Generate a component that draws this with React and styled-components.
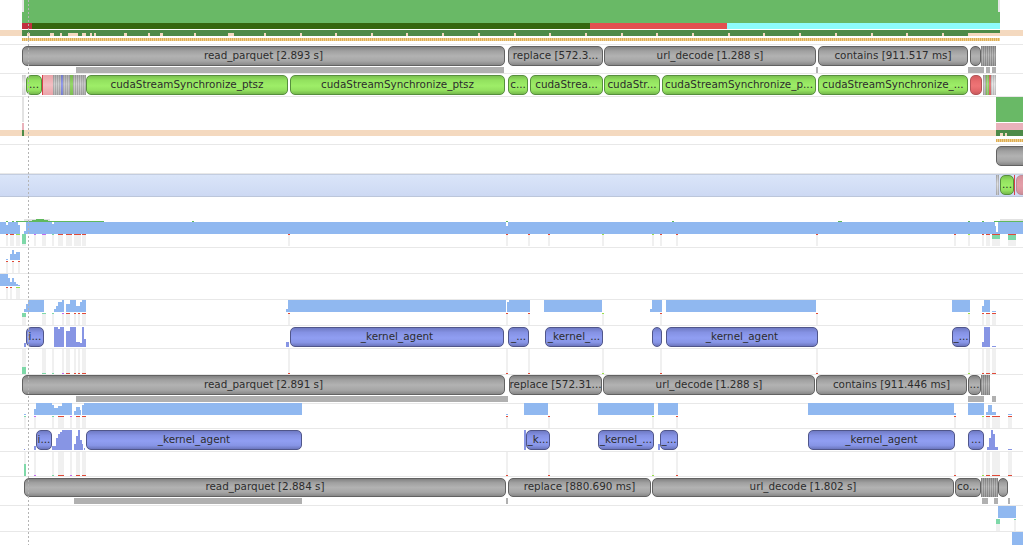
import React from 'react';
import styled, { createGlobalStyle, css } from 'styled-components';

const GlobalStyle = createGlobalStyle`
    html, body {
        margin: 0;
        background: #fff;
        font-family: "DejaVu Sans", "Liberation Sans", sans-serif;
    }
`
const Page = styled.div`
    position: relative;
    width: 1023px;
    height: 545px;
    overflow: hidden;
    display: flex;
    flex-direction: column;
`
const Cursor = styled.div`
    position: absolute;
    left: 28px;
    top: 0;
    bottom: 0;
    width: 1px;
    background: repeating-linear-gradient(180deg, #b4b4b4 0 2px, transparent 2px 4px);
`
const Track = styled.div`
    height: ${p => p.$h}px;
    flex: none;
    box-sizing: border-box;
    border-bottom: 1px solid #e8e8e8;
    ${p => p.$selected && css`
        background: linear-gradient(180deg, #dae5f9, #cdd9f3);
        border-top: 1px solid #c3cde0;
        border-bottom: 1px solid #bcc6da;
    `}
`
const Lane = styled.div`
    position: relative;
    height: ${p => p.$h}px;
    margin-top: ${p => p.$mt || 0}px;
    background: ${p => p.$bg || 'none'};
`

// everything below sits on the time axis, so x and width come from the data
const Block = styled.div`
    position: absolute;
    top: 0;
    bottom: 0;
    background: ${p => p.$color};
`
const HalfBlock = styled(Block)`
    ${p => (p.$low ? 'top: 50%;' : 'bottom: 50%;')}
`
const tones = {
    gray: css`
        border-color: #626262;
        background: linear-gradient(180deg, #828282, #a0a0a0 22%, #b2b2b2 50%, #a6a6a6 78%, #888);
    `,
    green: css`
        border-color: #578f3e;
        background: linear-gradient(180deg, #7cc150, #93e25f 25%, #9eee68 55%, #93e05f 80%, #76ba4c);
    `,
    purple: css`
        border-color: #50568a;
        background: linear-gradient(180deg, #6f7ac4, #8592e4 25%, #909ef2 55%, #8795e6 80%, #6c76be);
    `,
    red: css`
        border-color: #b25558;
        background: linear-gradient(180deg, #d25c5e, #e86c6e 30%, #ee7476 55%, #e2686a 80%, #ca5a5c);
    `,
}
const Span = styled.div`
    position: absolute;
    top: 0;
    bottom: 0;
    box-sizing: border-box;
    display: flex;
    align-items: center;
    justify-content: center;
    padding-bottom: 3px;
    border: 1px solid;
    border-bottom-width: 1.5px;
    border-radius: 5px;
    overflow: hidden;
    white-space: nowrap;
    font-size: 10.4px;
    color: #2c2c2c;
    ${p => tones[p.$tone]}
`
const Stripes = styled.div`
    position: absolute;
    top: 0;
    bottom: 0;
    opacity: 0.95;
    background:
        linear-gradient(180deg, rgba(0,0,0,0.14), rgba(255,255,255,0.1) 45%, rgba(0,0,0,0.1)),
        repeating-linear-gradient(90deg, ${p => p.$a} 0 1px, ${p => p.$b} 1px 2px);
`
const barColors = { blue: '#90b8f0', purple: '#8795e4', green: '#5fb95c', gray: '#e2e2e2' }
const Bar = styled.div`
    position: absolute;
    bottom: 0;
    background: ${p => barColors[p.$tone || 'blue']};
`
const Dotted = styled.div`
    position: absolute;
    top: 0;
    bottom: 0;
    background: repeating-linear-gradient(90deg, #dfae52 0 1px, #eccf93 1px 2px);
`
const Tick = styled.div`
    position: absolute;
    top: 0;
    bottom: 0;
    background: #f0f0f0;
    &::after {
        content: '';
        position: absolute;
        left: 0;
        right: 0;
        height: 1px;
        ${p => (p.$end ? 'bottom: 0;' : 'top: 0;')}
        background: ${p => p.$mark};
    }
`
const Fill = styled.div`
    position: absolute;
    left: 0;
    right: 0;
    bottom: 0;
    background: #7ed8a8;
`

const marks = { r: '#e04a38', p: '#c46af0', g: '#7ed8a8', l: '#9ae04a' }

const Spans = ({ items }) => items.map(([x, w, tone, text], i) => (
    <Span key={i} $tone={tone} style={{ left: x, width: w }}>{text}</Span>
))
const Blocks = ({ items, color }) => items.map(([x, w, c], i) => (
    <Block key={i} $color={c || color} style={{ left: x, width: w }} />
))
const Bars = ({ items, tone }) => items.map(([x, w, h], i) => (
    <Bar key={i} $tone={tone} style={{ left: x, width: w, height: h }} />
))
const StripeSet = ({ items }) => items.map(([x, w, a, b], i) => (
    <Stripes key={i} $a={a} $b={b} style={{ left: x, width: w }} />
))
const Ticks = ({ items, end, tall = {} }) => items.map(([x, w, m], i) => (
    <Tick key={i} $end={end} $mark={marks[m]} style={{ left: x, width: w }}>
        {tall[x] && <Fill style={{ height: tall[x], top: end ? 'auto' : 1 }} />}
    </Tick>
))

const clockTicks = [
    [27, 3], [50, 4], [60, 2], [68, 10], [82, 4], [90, 2], [94, 2], [124, 3], [148, 2], [160, 3], [194, 2], [228, 6], [264, 2], [300, 2],
]
for (let x = 335; x < 965; x += 35.7) clockTicks.push([Math.round(x), 2])

const topSpans = [
    [22, 483, 'gray', 'read_parquet [2.893 s]'],
    [508, 95, 'gray', 'replace [572.3...'],
    [604, 212, 'gray', 'url_decode [1.288 s]'],
    [818, 150, 'gray', 'contains [911.517 ms]'],
    [970, 11, 'gray', ''],
]
const greenSpans = [
    [26, 16, 'green', '...'],
    [86, 202, 'green', 'cudaStreamSynchronize_ptsz'],
    [290, 215, 'green', 'cudaStreamSynchronize_ptsz'],
    [508, 20, 'green', 'c...'],
    [530, 73, 'green', 'cudaStrea...'],
    [604, 56, 'green', 'cudaStr...'],
    [662, 154, 'green', 'cudaStreamSynchronize_p...'],
    [818, 150, 'green', 'cudaStreamSynchronize_...'],
    [970, 12, 'red', ''],
]
const greenStripes = [
    [22, 4, '#e6e6e6', '#f2f2f2'],
    [53, 7, '#a8a8a8', '#c8c8c8'],
    [60, 2, '#c0c0c0', '#d8d8d8'],
    [61, 2, '#8088e8', '#7f8ce8'],
    [63, 7, '#a8a8a8', '#c4c4c4'],
    [70, 3, '#84d050', '#84d050'],
    [73, 8, '#a6a6a6', '#cacaca'],
    [81, 5, '#a8a8a8', '#c0c0c0'],
    [983, 3, '#a8a8a8', '#c8c8c8'],
    [986, 3, '#84d050', '#a8c890'],
    [989, 2, '#e06868', '#e06868'],
    [991, 5, '#c8c8c8', '#e4e4e4'],
]

const midSpans = [
    [26, 18, 'purple', 'i...'],
    [290, 214, 'purple', '_kernel_agent'],
    [508, 21, 'purple', '_...'],
    [545, 58, 'purple', '_kernel_...'],
    [652, 10, 'purple', ''],
    [666, 152, 'purple', '_kernel_agent'],
    [952, 18, 'purple', '_...'],
]
const lowSpans = [
    [36, 16, 'purple', 'i...'],
    [86, 216, 'purple', '_kernel_agent'],
    [526, 24, 'purple', '_k...'],
    [598, 56, 'purple', '_kernel_...'],
    [660, 18, 'purple', '_...'],
    [808, 147, 'purple', '_kernel_agent'],
    [968, 16, 'purple', '...'],
]

const bandBars = [
    [0, 6, 12], [6, 2, 9], [8, 10, 12], [18, 2, 9], [24, 2, 3], [26, 26, 12], [52, 2, 10], [54, 452, 12], [506, 2, 8], [508, 487, 12],
    [995, 1, 8], [996, 2, 2], [998, 25, 12],
]
const firstTicks = [
    [6, 2, 'r'], [10, 4, 'r'], [16, 4, 'l'], [22, 4, 'g'], [34, 2, 'p'], [42, 4, 'p'], [52, 2, 'g'], [58, 5, 'r'], [66, 6, 'r'], [74, 7, 'r'],
    [82, 4, 'r'], [288, 2, 'r'], [506, 2, 'r'], [528, 2, 'r'], [548, 2, 'r'], [602, 2, 'l'], [652, 2, 'l'], [660, 2, 'r'], [676, 2, 'r'],
    [816, 2, 'r'], [954, 2, 'r'], [968, 2, 'l'], [982, 2, 'r'], [986, 4, 'r'], [992, 8, 'r'], [1008, 8, 'r'],
]
const midBlueBars = [
    [24, 2, 3], [26, 2, 8], [28, 16, 12], [54, 2, 3], [56, 2, 6], [58, 4, 10], [62, 2, 12], [66, 4, 8], [70, 4, 12], [74, 2, 12], [76, 4, 6],
    [80, 2, 10], [82, 4, 12], [286, 2, 3], [288, 218, 12], [507, 2, 10], [509, 21, 12], [544, 58, 12], [650, 2, 3], [652, 10, 12], [666, 150, 12],
    [952, 18, 12], [982, 2, 6], [984, 6, 12], [992, 4, 1],
]
const midTicks = [
    [22, 4, 'g'], [42, 4, 'g'], [52, 2, 'g'], [62, 2, 'p'], [66, 4, 'r'], [74, 2, 'r'], [78, 2, 'r'], [82, 4, 'r'], [288, 2, 'r'], [506, 2, 'r'],
    [528, 2, 'r'], [602, 2, 'l'], [660, 2, 'r'], [816, 2, 'r'], [968, 2, 'l'], [982, 2, 'r'], [986, 4, 'r'], [992, 4, 'r'],
]
const midPurpleBars = [
    [24, 2, 4], [54, 4, 20], [58, 2, 18], [60, 4, 20], [66, 4, 16], [70, 6, 20], [76, 4, 5], [80, 2, 4], [82, 2, 20], [84, 2, 8],
    [286, 3, 5], [982, 2, 5], [984, 6, 20], [992, 4, 1],
]
const lowBlueBars = [
    [24, 2, 1], [34, 2, 6], [36, 16, 12], [52, 2, 10], [54, 4, 7], [58, 4, 9], [62, 10, 12], [74, 2, 4], [76, 4, 8], [80, 1, 5], [82, 2, 10], [84, 2, 12],
    [86, 216, 12], [506, 2, 1], [524, 24, 12], [598, 56, 12], [658, 20, 12], [808, 146, 12], [954, 2, 2], [968, 16, 12], [986, 2, 3], [988, 4, 10],
    [992, 4, 3], [1008, 4, 1],
]
const lowTicks = [
    [24, 2, 'g'], [34, 2, 'p'], [52, 2, 'g'], [58, 6, 'r'], [70, 2, 'p'], [76, 4, 'r'], [82, 4, 'r'], [506, 2, 'r'], [548, 2, 'r'], [652, 2, 'l'],
    [676, 2, 'r'], [954, 2, 'r'], [982, 2, 'l'], [986, 4, 'r'], [992, 8, 'r'], [1008, 4, 'r'],
]
const lowPurpleBars = [
    [24, 1, 1], [34, 2, 4], [52, 4, 4], [56, 2, 12], [58, 2, 16], [60, 2, 18], [62, 10, 20], [74, 2, 6], [76, 2, 14], [78, 2, 20], [80, 2, 10], [82, 1, 6],
    [84, 1, 2], [524, 2, 20], [658, 2, 6], [987, 2, 3], [989, 2, 12], [991, 2, 20], [993, 2, 16], [995, 3, 3], [1008, 4, 1],
]

const Ruler = ({ clock }) => (
    <>
        <HalfBlock $color="#4d8a48" style={{ left: clock.x, width: clock.top }} />
        <HalfBlock $low $color="#4d8a48" style={{ left: clock.x, width: clock.low }} />
        {clock.ticks.map(([x, w], i) => (
            <HalfBlock key={i} $low $color="#f4d9bf" style={{ left: x, width: w }} />
        ))}
    </>
)

const App = () => (
    <Page>
        <GlobalStyle />
        <Track $h={45}>
            <Lane $h={23}>
                <Blocks color="#69b966" items={[[24, 974]]} />
                <HalfBlock $low $color="#69b966" style={{ left: 22, width: 2 }} />
                <HalfBlock $color="#e6e6e6" style={{ left: 22, width: 2 }} />
                <HalfBlock $low $color="#69b966" style={{ left: 998, width: 2 }} />
                <HalfBlock $color="#e6e6e6" style={{ left: 998, width: 2 }} />
            </Lane>
            <Lane $h={6}>
                <Blocks items={[[22, 10, '#c2303f'], [32, 558, '#35660f'], [590, 137, '#e25050'], [727, 273, '#8dfcfc']]} />
            </Lane>
            <Lane $h={6} $mt={1} $bg="#f4d9bf">
                <Ruler clock={{ x: 22, top: 978, low: 946, ticks: clockTicks }} />
            </Lane>
            <Lane $h={3} $mt={2}>
                <Dotted style={{ left: 22, width: 978 }} />
            </Lane>
        </Track>
        <Track $h={29}>
            <Lane $h={20} $mt={1}>
                <Spans items={topSpans} />
                <StripeSet items={[[981, 15, '#8a8a8a', '#b0b0b0']]} />
            </Lane>
            <Lane $h={6} $mt={1}>
                <Blocks color="#b0b0b0" items={[[76, 428], [816, 2], [968, 16], [986, 4], [992, 4]]} />
            </Lane>
        </Track>
        <Track $h={23}>
            <Lane $h={20} $mt={1}>
                <StripeSet items={greenStripes} />
                <Block $color="linear-gradient(180deg, #eaa3a8, #f2bfc3 50%, #eaa3a8)" style={{ left: 42, width: 11 }} />
                <Block $color="#d8414c" style={{ left: 42, width: 1 }} />
                <Spans items={greenSpans} />
            </Lane>
        </Track>
        <Track $h={48}>
            <Lane $h={25}>
                <Blocks color="#e2e2e2" items={[[22, 2]]} />
                <Blocks color="#69b966" items={[[996, 27]]} />
            </Lane>
            <Lane $h={7} $mt={1}>
                <Blocks color="#e9b2bb" items={[[22, 2], [996, 27]]} />
            </Lane>
            <Lane $h={6} $bg="#f4d9bf">
                <Ruler clock={{ x: 996, top: 27, low: 27, ticks: [[1000, 3], [1005, 2]] }} />
                <Blocks color="#4d8a48" items={[[22, 2]]} />
            </Lane>
            <Lane $h={3} $mt={3}>
                <Dotted style={{ left: 996, width: 27 }} />
            </Lane>
        </Track>
        <Track $h={29}>
            <Lane $h={20} $mt={1}>
                <Spans items={[[996, 40, 'gray', '']]} />
            </Lane>
        </Track>
        <Track $h={23} $selected>
            <Lane $h={20}>
                <StripeSet items={[[996, 3, '#b8b8b8', '#dcdcdc']]} />
                <Spans items={[[1000, 14, 'green', '...']]} />
                <Block $color="#d8414c" style={{ left: 1014, width: 1 }} />
                <Span $tone="red" style={{ left: 1016, width: 20, opacity: 0.6 }} />
            </Lane>
        </Track>
        <Track $h={51}>
            <Lane $h={3} $mt={22}>
                <Bars tone="gray" items={[[24, 26, 3], [1000, 23, 3]]} />
                <Bars tone="green" items={[[6, 2, 1], [12, 2, 1], [16, 88, 1], [32, 16, 2], [36, 8, 3], [192, 2, 1], [506, 2, 1], [672, 2, 1], [838, 4, 1], [968, 2, 1], [982, 2, 1], [994, 29, 1]]} />
            </Lane>
            <Lane $h={12}>
                <Bars items={bandBars} />
            </Lane>
            <Lane $h={12}>
                <Ticks items={firstTicks} tall={{ 22: 9, 992: 4, 1008: 5 }} />
            </Lane>
        </Track>
        <Track $h={26}>
            <Lane $h={10} $mt={2}>
                <Bars items={[[6, 2, 1], [10, 2, 6], [12, 2, 10], [14, 2, 6], [16, 4, 8]]} />
            </Lane>
            <Lane $h={12} $mt={1}>
                <Ticks items={[[6, 2, 'r'], [12, 2, 'r'], [18, 2, 'r']]} />
            </Lane>
        </Track>
        <Track $h={26}>
            <Lane $h={12}>
                <Bars items={[[0, 8, 12], [8, 2, 8], [10, 2, 4], [12, 2, 8], [14, 2, 4], [16, 2, 2], [18, 2, 1]]} />
            </Lane>
            <Lane $h={12} $mt={1}>
                <Ticks items={[[6, 2, 'r'], [10, 2, 'r'], [16, 4, 'l']]} />
            </Lane>
        </Track>
        <Track $h={26}>
            <Lane $h={12}>
                <Bars items={midBlueBars} />
            </Lane>
            <Lane $h={12} $mt={1}>
                <Ticks items={midTicks} tall={{ 22: 3 }} />
            </Lane>
        </Track>
        <Track $h={23}>
            <Lane $h={20} $mt={1}>
                <Bars tone="purple" items={midPurpleBars} />
                <Spans items={midSpans} />
            </Lane>
        </Track>
        <Track $h={26}>
            <Lane $h={25}>
                <Ticks end items={midTicks} tall={{ 22: 7 }} />
            </Lane>
        </Track>
        <Track $h={29}>
            <Lane $h={20}>
                <Spans items={[
                    [22, 483, 'gray', 'read_parquet [2.891 s]'],
                    [509, 93, 'gray', 'replace [572.31...'],
                    [603, 212, 'gray', 'url_decode [1.288 s]'],
                    [816, 151, 'gray', 'contains [911.446 ms]'],
                    [968, 13, 'gray', '...'],
                ]} />
                <StripeSet items={[[981, 9, '#8a8a8a', '#b0b0b0']]} />
            </Lane>
            <Lane $h={6} $mt={1}>
                <Blocks color="#b0b0b0" items={[[76, 432], [968, 16], [992, 4]]} />
            </Lane>
        </Track>
        <Track $h={25}>
            <Lane $h={12} $mt={-1}>
                <Bars items={lowBlueBars} />
            </Lane>
            <Lane $h={12} $mt={1}>
                <Ticks items={lowTicks} />
            </Lane>
        </Track>
        <Track $h={23}>
            <Lane $h={20} $mt={1}>
                <Bars tone="purple" items={lowPurpleBars} />
                <Spans items={lowSpans} />
            </Lane>
        </Track>
        <Track $h={25}>
            <Lane $h={24}>
                <Ticks end items={lowTicks} tall={{ 24: 12 }} />
            </Lane>
        </Track>
        <Track $h={29}>
            <Lane $h={19} $mt={1}>
                <Spans items={[
                    [24, 482, 'gray', 'read_parquet [2.884 s]'],
                    [508, 143, 'gray', 'replace [880.690 ms]'],
                    [652, 302, 'gray', 'url_decode [1.802 s]'],
                    [955, 26, 'gray', 'co...'],
                    [998, 10, 'gray', ''],
                ]} />
                <StripeSet items={[[981, 17, '#8a8a8a', '#b0b0b0']]} />
            </Lane>
            <Lane $h={6} $mt={1}>
                <Blocks color="#b0b0b0" items={[[74, 228], [506, 2], [982, 6], [994, 4], [1008, 2]]} />
            </Lane>
        </Track>
        <Track $h={26}>
            <Lane $h={12}>
                <Bars items={[[998, 18, 12]]} />
            </Lane>
            <Lane $h={12} $mt={1}>
                <Ticks items={[[996, 4, 'g'], [1014, 2, 'g']]} tall={{ 996: 4 }} />
            </Lane>
        </Track>
        <Lane $h={13}>
            <Bars items={[[1012, 11, 13]]} />
        </Lane>
        <Cursor />
    </Page>
)

export default App;
